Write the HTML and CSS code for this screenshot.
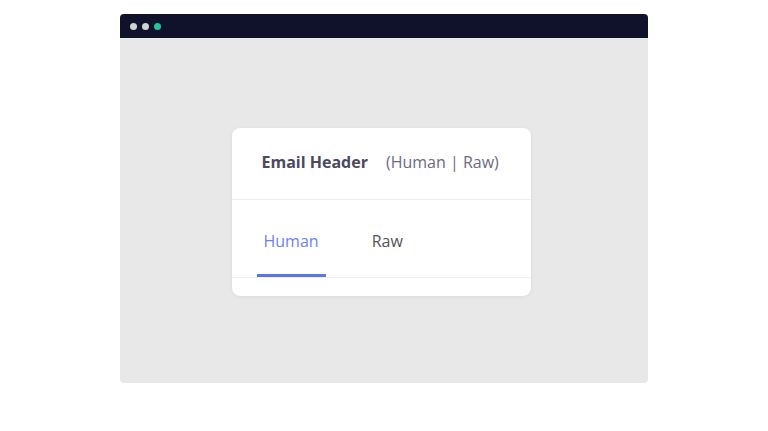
FILE: index.html
```html
<!DOCTYPE html>
<html>
<head>
<meta charset="utf-8">
<link rel="stylesheet" href="styles.css">
</head>
<body>
<div class="window">
  <div class="titlebar">
    <span class="dot"></span>
    <span class="dot"></span>
    <span class="dot dot-green"></span>
  </div>
  <div class="content">
    <div class="card">
      <div class="card-header">
        <span class="title">Email Header</span>
        <span class="subtitle">(Human | Raw)</span>
      </div>
      <div class="tabs">
        <div class="tab active">Human</div>
        <div class="tab">Raw</div>
      </div>
      <div class="card-foot"></div>
    </div>
  </div>
</div>
</body>
</html>
```

FILE: styles.css
```css
html, body {
  margin: 0;
  padding: 0;
  background: #ffffff;
  font-family: "Open Sans", "Noto Sans", sans-serif;
}
.window {
  margin: 14px 0 0 120px;
  width: 528px;
  height: 369px;
  border-radius: 4px;
  overflow: hidden;
  display: flex;
  flex-direction: column;
  background: #e8e8e8;
}
.titlebar {
  height: 24px;
  background: #10112a;
  display: flex;
  align-items: center;
  gap: 5px;
  padding-left: 10px;
  flex-shrink: 0;
}
.dot {
  width: 7px;
  height: 7px;
  border-radius: 50%;
  background: #d2d2d2;
}
.dot-green {
  background: #22c39c;
}
.content {
  flex: 1;
  display: flex;
  align-items: center;
  justify-content: center;
  padding: 3px 6px 0 0;
}
.card {
  width: 299px;
  height: 168px;
  background: #ffffff;
  border-radius: 8px;
  box-shadow: 0 1px 4px rgba(0,0,0,0.06);
  display: flex;
  flex-direction: column;
}
.card-header {
  height: 72px;
  border-bottom: 1px solid #ededed;
  display: flex;
  align-items: center;
  padding: 0 0 4px 30px;
  gap: 18px;
  font-size: 16px;
  box-sizing: border-box;
  flex-shrink: 0;
}
.title {
  font-weight: 700;
  color: #4b4a5f;
}
.subtitle {
  color: #6b6b80;
}
.tabs {
  height: 78px;
  display: flex;
  padding-left: 25px;
  gap: 39px;
  border-bottom: 1px solid #f0f0f0;
  box-sizing: border-box;
  flex-shrink: 0;
}
.tab {
  padding: 30px 7px 0;
  font-size: 16px;
  line-height: 22px;
  color: #555555;
  border-bottom: 3px solid transparent;
  box-sizing: border-box;
}
.tab.active {
  color: #6f7ff7;
  border-bottom-color: #5b73f5;
}
.card-foot {
  flex: 1;
}
```
